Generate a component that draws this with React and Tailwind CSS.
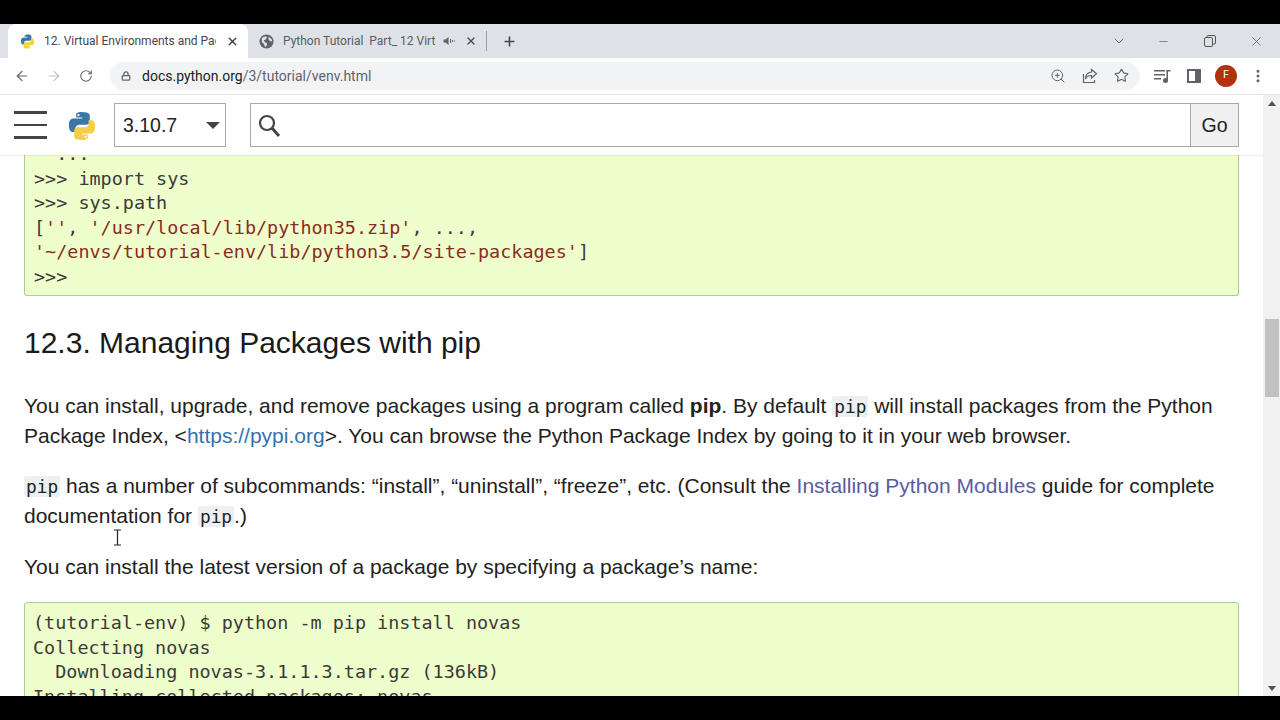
import React from 'react';
import { ArrowLeft, ArrowRight, RotateCw, Lock, ZoomIn, Star, X, Minus, ChevronDown, Plus, EllipsisVertical } from 'lucide-react';

// ─── Small drawings ────────────────────────────────────
function PythonLogo({ size = 16 }) {
  return (
    <svg width={size} height={size} viewBox="0 0 32 32">
      <path fill="#3a76a8" d="M15.8 1C9.4 1 9.8 3.8 9.8 3.8V7h6.4v1H6.9S2 7.4 2 15.1c0 7.6 4.3 7.4 4.3 7.4h2.6v-3.6s-.1-4.3 4.2-4.3h7.2s4 .1 4-3.9V4.9S25 1 15.8 1z" />
      <circle cx="12.2" cy="4.4" r="1.2" fill="#fff" />
      <path fill="#f7cf45" d="M16.2 31c6.4 0 6-2.8 6-2.8V25h-6.4v-1h9.3s4.9.6 4.9-7.1c0-7.6-4.3-7.4-4.3-7.4h-2.6v3.6s.1 4.3-4.2 4.3h-7.2s-4 -.1-4 3.9v6.8S7 31 16.2 31z" />
      <circle cx="19.8" cy="27.6" r="1.2" fill="#fff" />
    </svg>
  );
}

function GlobeIcon() {
  return (
    <svg width="15" height="15" viewBox="0 0 16 16">
      <circle cx="8" cy="8" r="7.5" fill="#5f6368" />
      <path fill="#dee1e6" d="M3 4l4-1.5 1.5 1L7 6 5 6.500 6.500 9l2 .5V12l-2 2-1-3-2.500-2.500zM10.500 3l3 2.500L14 8l-2.500-.5L10 5z" />
    </svg>
  );
}

function SpeakerIcon() {
  return (
    <svg width="12" height="12" viewBox="0 0 12 12" fill="#5f6368">
      <path d="M0.500 4.500h2L5.500 2v8l-3-2.500h-2z" />
      <rect x="7" y="4" width="1" height="4" />
      <rect x="9" y="5" width="1" height="2" />
      <rect x="11" y="5.500" width="1" height="1" />
    </svg>
  );
}

function ShareIcon() {
  return (
    <svg width="18" height="18" viewBox="0 0 18 18" fill="none" stroke="#5f6368" strokeWidth="1.200">
      <path d="M10.500 2.500l5 4.300-5 4.200V8.500c-3 0-5 1-6 3.500 0-4 2-6.500 6-7z" />
      <path d="M2.500 7v8.500h11V13" />
    </svg>
  );
}

function MediaIcon() {
  return (
    <svg width="17" height="16" viewBox="0 0 17 16" fill="#5f6368">
      <rect x="0" y="2" width="11" height="1.500" />
      <rect x="0" y="6" width="11" height="1.500" />
      <rect x="0" y="10" width="7" height="1.500" />
      <rect x="12.500" y="2" width="1.500" height="10" />
      <rect x="12.500" y="2" width="4" height="1.500" />
      <circle cx="11.500" cy="12.500" r="2.500" />
    </svg>
  );
}

function RestoreIcon() {
  return (
    <svg width="12" height="12" viewBox="0 0 12 12" fill="none" stroke="#555" strokeWidth="1">
      <rect x="0.500" y="2.500" width="8" height="9" rx="1.500" />
      <path d="M3 2.500V1.500a1 1 0 0 1 1-1h6a1.500 1.500 0 0 1 1.500 1.500v6a1 1 0 0 1-1 1h-2" />
    </svg>
  );
}

function Magnifier() {
  return (
    <svg width="26" height="26" viewBox="0 0 26 26" fill="none" stroke="#444">
      <circle cx="10" cy="10" r="7" strokeWidth="2.200" />
      <path d="M15 15l7 8" strokeWidth="3" />
    </svg>
  );
}

// ─── Browser chrome ────────────────────────────────────
function TabBar() {
  return (
    <div className="flex h-[34px] items-end bg-[#dee1e6] pl-2 font-['Roboto',sans-serif]">
      <div className="flex h-[34px] w-[240px] items-center rounded-t-lg bg-white pl-[12px] pr-[9px]">
        <PythonLogo size={15} />
        <span className="ml-[9px] w-[172px] overflow-hidden whitespace-nowrap text-[12px] text-[#45474a]">12. Virtual Environments and Packages</span>
        <X size={13} strokeWidth={2.5} className="ml-auto text-[#3c4043]" />
      </div>
      <div className="flex h-[34px] items-center pl-[11px]">
        <GlobeIcon />
        <span className="ml-[9px] w-[152px] overflow-hidden whitespace-nowrap text-[12px] text-[#5a5c60]">Python Tutorial&nbsp; Part_ 12 Virtual Env</span>
        <span className="ml-[8px]"><SpeakerIcon /></span>
        <X size={12} strokeWidth={2.5} className="ml-[10px] text-[#45474a]" />
        <div className="ml-[9px] h-[20px] w-px bg-[#9aa0a6]" />
        <Plus size={15} strokeWidth={2.5} className="ml-[15px] text-[#45474a]" />
      </div>
      <div className="ml-auto flex h-[34px] items-center text-[#555]">
        <ChevronDown size={16} strokeWidth={1.200} />
        <Minus size={13} strokeWidth={1.200} className="ml-[30px]" />
        <span className="ml-[34px]"><RestoreIcon /></span>
        <X size={15} strokeWidth={1.200} className="ml-[33px] mr-[16px]" />
      </div>
    </div>
  );
}

function Toolbar() {
  return (
    <div className="flex h-[37px] items-center border-b border-[#e3e4e6] bg-white pl-[14px] pb-px font-['Roboto',sans-serif]">
      <ArrowLeft size={16} strokeWidth={1.800} className="text-[#5f6368]" />
      <ArrowRight size={16} strokeWidth={1.800} className="ml-[16px] text-[#bdc1c6]" />
      <RotateCw size={14} strokeWidth={1.800} className="ml-[17px] text-[#5f6368]" />
      <div className="ml-[17px] flex h-[28px] w-[1030px] items-center rounded-full bg-[#f1f3f4] pl-[11px]">
        <Lock size={10} strokeWidth={3} className="text-[#5f6368]" />
        <span className="ml-[11px] pt-px text-[14px] text-[#5f6368]">
          <span className="text-[#202124]">docs.python.org</span>/3/tutorial/venv.html
        </span>
        <div className="ml-auto flex items-center pr-[11px] text-[#5f6368]">
          <ZoomIn size={16} strokeWidth={1.500} />
          <span className="ml-[15px]"><ShareIcon /></span>
          <Star size={15} strokeWidth={1.800} className="ml-[15px]" />
        </div>
      </div>
      <div className="ml-[14px]"><MediaIcon /></div>
      <div className="ml-[16px] h-[14px] w-[14px] border-2 border-[#5f6368] pl-[6px]">
        <div className="h-full bg-[#5f6368]" />
      </div>
      <div className="ml-[14px] flex h-[22px] w-[22px] items-center justify-center rounded-full bg-[#b5300f] text-[11px] text-white">F</div>
      <EllipsisVertical size={16} strokeWidth={2.500} className="ml-[13px] text-[#5f6368]" />
    </div>
  );
}

// ─── Page pieces ───────────────────────────────────────
function DocsHeader() {
  return (
    <div className="z-10 flex h-[60px] shrink-0 items-center bg-white pb-[1px] pl-[14px] pr-[24px] shadow-[0_1px_1px_rgba(0,0,0,0.06)]">
      <div className="flex w-[33px] flex-col gap-[10px] pt-px">
        <div className="h-[2.500px] bg-[#444]" />
        <div className="h-[2.500px] bg-[#444]" />
        <div className="h-[2.500px] bg-[#444]" />
      </div>
      <div className="ml-[20px] pt-[2px]"><PythonLogo size={30} /></div>
      <div className="ml-[17px] flex h-[44px] w-[112px] items-center justify-between border border-[#a9a9a9] pl-[8px] pr-[5px] pt-[2px] text-[19.500px] text-[#222]">
        3.10.7
        <span className="h-0 w-0 border-x-[7px] border-t-[7px] border-x-transparent border-t-[#444]" />
      </div>
      <div className="ml-[24px] flex h-[44px] flex-1 items-center border border-[#a9a9a9]">
        <span className="ml-[6px] mt-[2px]"><Magnifier /></span>
        <div className="ml-auto flex h-full w-[48px] items-center justify-center border-l border-[#a9a9a9] bg-[#f0f0f0] pt-[2px] text-[19.500px] text-[#222]">Go</div>
      </div>
    </div>
  );
}

function Code({ children }) {
  return <code className="rounded-[3px] bg-[#ecf0f3] px-[2px] font-['DejaVu_Sans_Mono',monospace] text-[17.800px] leading-none text-[#222]">{children}</code>;
}

function Scrollbar() {
  return (
    <div className="flex w-[17px] shrink-0 flex-col items-center bg-[#f1f1f1]">
      <div className="mt-[6px] h-0 w-0 border-x-[4px] border-b-[5px] border-x-transparent border-b-[#505050]" />
      <div className="mt-[213px] h-[78px] w-[14px] bg-[#c1c1c1]" />
      <div className="mt-auto mb-[5px] h-0 w-0 border-x-[4px] border-t-[5px] border-x-transparent border-t-[#505050]" />
    </div>
  );
}

function Str({ children }) {
  return <span className="text-[#8a2b1f]">{children}</span>;
}

function DocsContent() {
  return (
    <div className="flex-1 overflow-hidden px-[24px] font-['Liberation_Sans',sans-serif] text-[21px] leading-[30px] text-[#222]">
      <pre className="-mt-[15px] h-[156px] rounded-b-[3px] border border-t-0 border-[#aacc99] bg-[#eeffcc] pl-[9px] pt-[2px] font-['DejaVu_Sans_Mono',monospace] text-[18.450px] leading-[24.500px] text-[#3a3a3a]">
        {'  ...\n>>> import sys\n>>> sys.path\n['}
        <Str>''</Str>{', '}<Str>'/usr/local/lib/python35.zip'</Str>{', ...,\n'}
        <Str>'~/envs/tutorial-env/lib/python3.5/site-packages'</Str>{']\n>>>'}
      </pre>

      <h2 className="mt-[27px] text-[30px] leading-[40px] text-[#1a1a1a]">12.3. Managing Packages with pip</h2>

      <p className="mt-[28px] whitespace-nowrap">
        You can install, upgrade, and remove packages using a program called <b>pip</b>. By default <Code>pip</Code> will install packages from the Python<br />
        Package Index, &lt;<span className="text-[#3572b0]">https://pypi.org</span>&gt;. You can browse the Python Package Index by going to it in your web browser.
      </p>

      <p className="mt-[20px] whitespace-nowrap">
        <Code>pip</Code> has a number of subcommands: “install”, “uninstall”, “freeze”, etc. (Consult the <span className="text-[#5b5b9f]">Installing Python Modules</span> guide for complete<br />
        documentation for <Code>pip</Code>.)
      </p>

      <p className="mt-[21px] whitespace-nowrap">You can install the latest version of a package by specifying a package’s name:</p>

      <pre className="mt-[20px] h-[140px] rounded-t-[3px] border border-[#aacc99] bg-[#eeffcc] pl-[8px] pt-[8px] font-['DejaVu_Sans_Mono',monospace] text-[18.450px] leading-[24.500px] text-[#3a3a3a]">
        {'(tutorial-env) $ python -m pip install novas\nCollecting novas\n  Downloading novas-3.1.1.3.tar.gz (136kB)\nInstalling collected packages: novas'}
      </pre>
    </div>
  );
}

// ─── App ───────────────────────────────────────────────
export default function App() {
  return (
    <div className="relative flex h-[720px] w-[1280px] flex-col overflow-hidden bg-black pb-[24px] pt-[24px] font-['Liberation_Sans',sans-serif]">
      <TabBar />
      <Toolbar />
      <div className="flex min-h-0 flex-1 bg-white">
        <div className="flex min-w-0 flex-1 flex-col overflow-hidden">
          <DocsHeader />
          <DocsContent />
        </div>
        <Scrollbar />
      </div>
      {/* mouse pointer over the page */}
      <svg className="absolute left-[112px] top-[529px]" width="11" height="17" viewBox="0 0 11 17" fill="none" stroke="#222" strokeWidth="1.200">
        <path d="M2 1h7M5.500 1v15M2 16h7" />
      </svg>
    </div>
  );
}
